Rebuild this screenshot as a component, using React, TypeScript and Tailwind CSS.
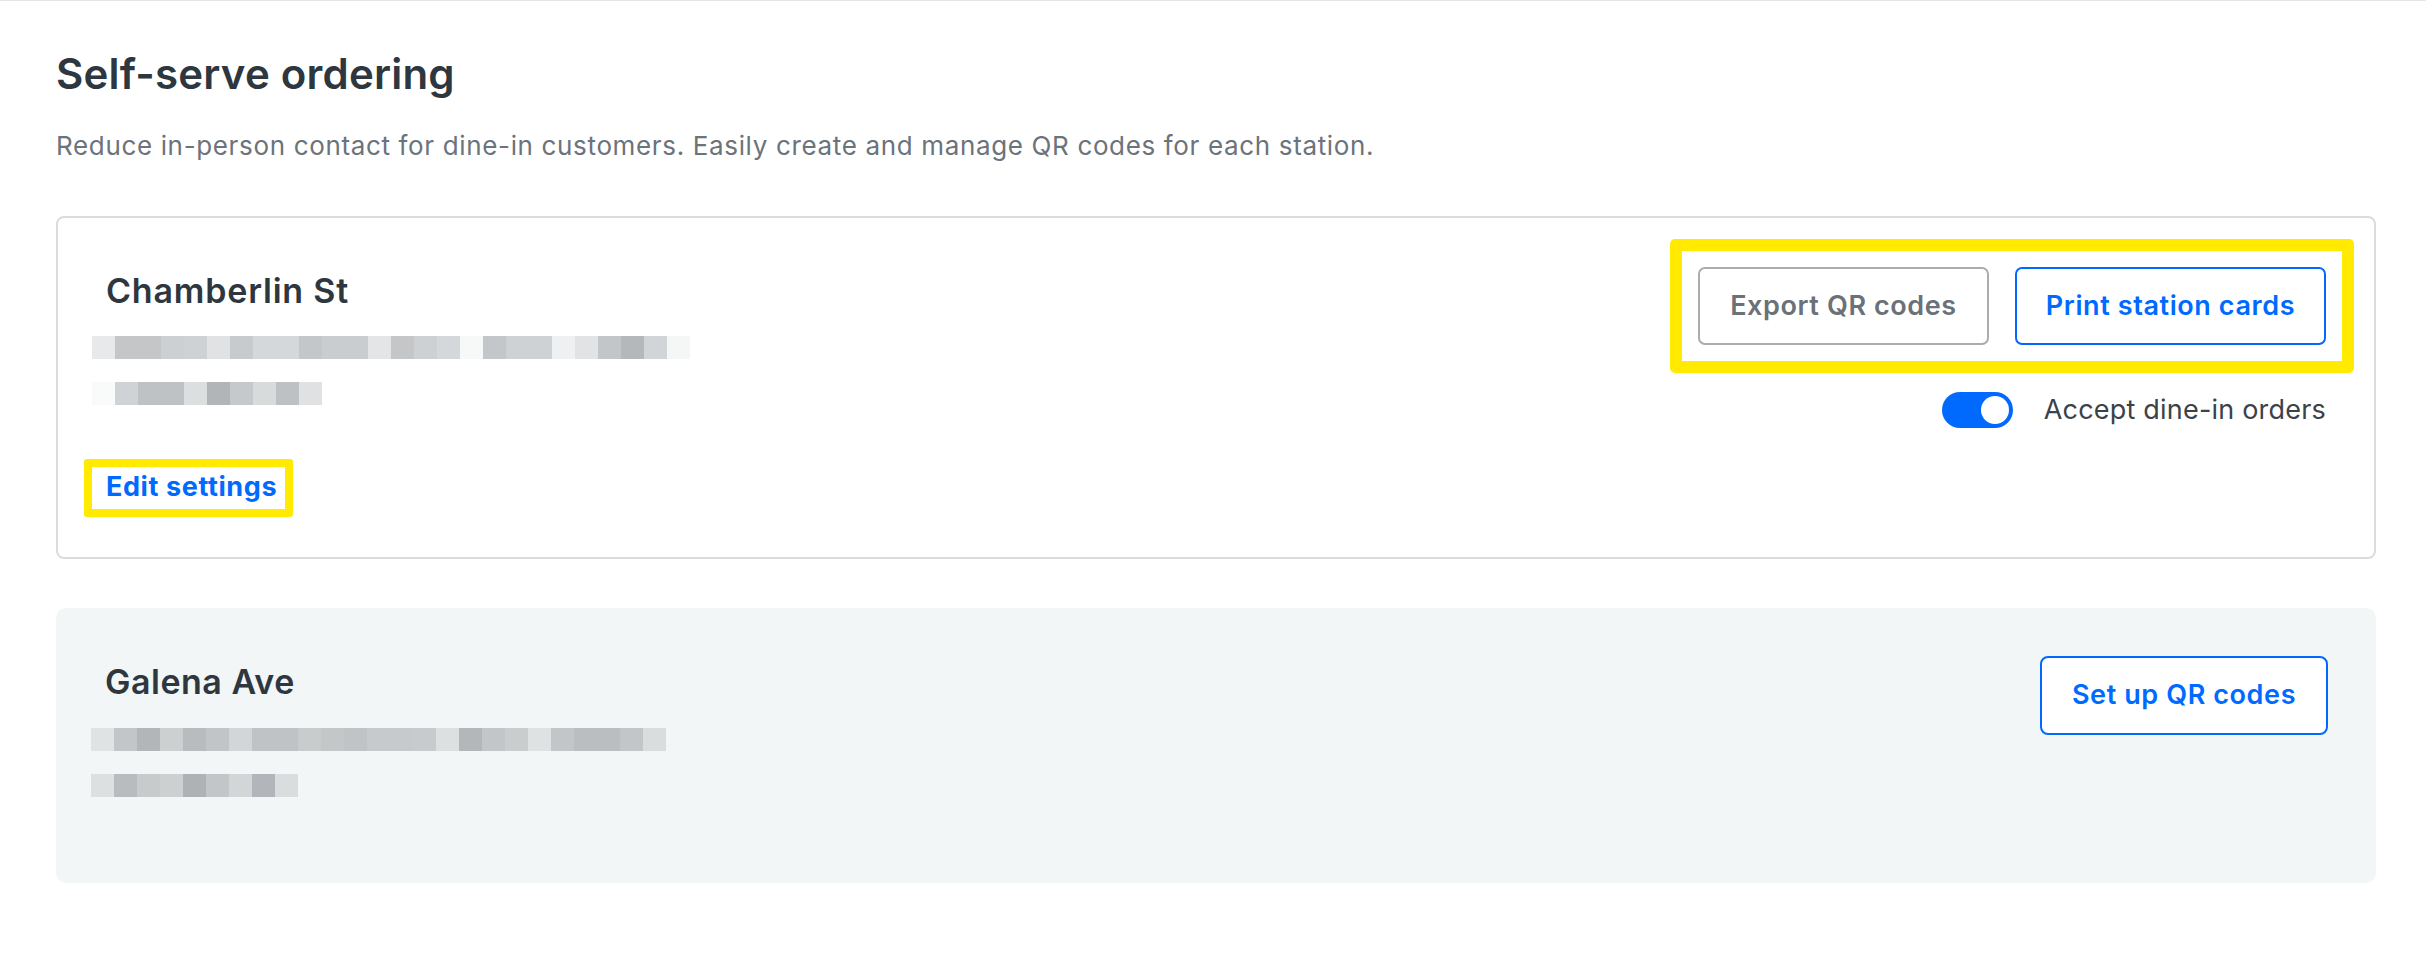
import React from "react";

const chamberlinLine1 = [
  "bg-[#e8e9ea]", "bg-[#c4c6c8]", "bg-[#c4c6c8]", "bg-[#cdd0d2]", "bg-[#cfd2d4]",
  "bg-[#e0e2e3]", "bg-[#c8cbcd]", "bg-[#d5d8da]", "bg-[#d5d8da]", "bg-[#c4c7c9]",
  "bg-[#cacdcf]", "bg-[#cacdcf]", "bg-[#e3e5e6]", "bg-[#c4c6c8]", "bg-[#ced1d3]",
  "bg-[#d5d8da]", "bg-[#f7f8f8]", "bg-[#c4c7c9]", "bg-[#cfd2d4]", "bg-[#cfd2d4]",
  "bg-[#eff0f1]", "bg-[#e1e3e4]", "bg-[#c3c6c8]", "bg-[#b5b8bb]", "bg-[#d2d5d7]",
  "bg-[#f5f6f6]",
];

const chamberlinLine2 = [
  "bg-[#f9fafa]", "bg-[#d0d3d5]", "bg-[#bfc2c5]", "bg-[#bfc2c5]", "bg-[#dcdfe0]",
  "bg-[#b2b5b8]", "bg-[#c6c9cb]", "bg-[#d8dbdc]", "bg-[#bec1c4]", "bg-[#dfe1e2]",
];

const galenaLine1 = [
  "bg-[#e0e3e4]", "bg-[#c3c6c8]", "bg-[#b3b6b9]", "bg-[#cdd0d1]", "bg-[#b9bcbe]",
  "bg-[#c1c5c7]", "bg-[#d3d6d8]", "bg-[#c0c3c5]", "bg-[#c0c3c5]", "bg-[#c9cccd]",
  "bg-[#c3c7c8]", "bg-[#c0c4c6]", "bg-[#c7cacc]", "bg-[#c7cacc]", "bg-[#c8cbcd]",
  "bg-[#dde0e1]", "bg-[#b3b7ba]", "bg-[#c2c6c8]", "bg-[#c9cdce]", "bg-[#dfe2e3]",
  "bg-[#c3c6c8]", "bg-[#bbbec1]", "bg-[#bbbec1]", "bg-[#c3c6c8]", "bg-[#dadddd]",
];

const galenaLine2 = [
  "bg-[#dde0e1]", "bg-[#b9bcbe]", "bg-[#c8cbcc]", "bg-[#cdd0d1]", "bg-[#aeb2b5]",
  "bg-[#c3c6c8]", "bg-[#d3d6d7]", "bg-[#b2b6bb]", "bg-[#dadddd]",
];

// blurred address lines (pixelated in the screenshot)
function Mosaic({ cells, className }: { cells: string[]; className?: string }) {
  return (
    <div className={`flex h-[23px] -ml-[14px] ${className ?? ""}`}>
      {cells.map((c, i) => (
        <div key={i} className={`h-[23px] w-[23px] ${c}`} />
      ))}
    </div>
  );
}

function Toggle() {
  return (
    <div className="flex h-[36px] w-[71px] items-center justify-end rounded-full bg-[#006aff] pr-[4px]">
      <div className="h-[28px] w-[28px] rounded-full bg-white" />
    </div>
  );
}

export default function App() {
  return (
    <div className="min-h-[958px] w-full border-t border-[#e3e6e8] bg-white pl-[56px] pr-[50px] pt-[49px] font-['Inter',sans-serif]">
      <h1 className="text-[42px] font-semibold leading-[48px] tracking-[0.2px] text-[#2e3740]">
        Self-serve ordering
      </h1>
      <p className="mt-[30px] text-[26px] leading-[36px] tracking-[0.65px] text-[#6b737b]">
        Reduce in-person contact for dine-in customers. Easily create and manage QR codes for each station.
      </p>

      {/* Chamberlin St */}
      <div className="mt-[52px] flex h-[343px] justify-between rounded-[8px] border-2 border-[#dadde0] px-[48px] pt-[49px]">
        <div className="mt-[4px] flex flex-col items-start">
          <div className="text-[34px] font-semibold leading-[40px] tracking-[0.8px] text-[#2e3740]">Chamberlin St</div>
          <Mosaic cells={chamberlinLine1} className="mt-[25px]" />
          <Mosaic cells={chamberlinLine2} className="mt-[23px]" />
          <div className="-ml-[22px] mt-[54px] rounded-[3px] border-[8px] border-[#ffea00] pb-[6px] pl-[14px] pr-[8px] pt-[4px]">
            <span className="text-[27px] font-bold leading-[32px] tracking-[0.6px] text-[#006aff]">Edit settings</span>
          </div>
        </div>

        <div className="flex flex-col items-end">
          <div className="-mr-[28px] -mt-[28px] -mb-[28px] flex gap-[26px] rounded-[5px] border-[12px] border-[#ffea00] p-[16px]">
            <button className="flex h-[78px] w-[291px] items-center justify-center rounded-[7px] border-2 border-[#a9adb1] bg-white text-[27px] font-semibold tracking-[0.6px] text-[#6b7178]">
              Export QR codes
            </button>
            <button className="flex h-[78px] w-[311px] items-center justify-center rounded-[7px] border-2 border-[#006aff] bg-white text-[27px] font-semibold tracking-[0.6px] text-[#006aff]">
              Print station cards
            </button>
          </div>
          <div className="mt-[47px] flex items-center gap-[31px]">
            <Toggle />
            <span className="text-[27px] leading-[36px] tracking-[0.2px] text-[#3b4249]">Accept dine-in orders</span>
          </div>
        </div>
      </div>

      {/* Galena Ave */}
      <div className="mt-[49px] flex h-[275px] justify-between rounded-[10px] bg-[#f2f6f6] pl-[49px] pr-[48px] pt-[48px]">
        <div className="mt-[6px] flex flex-col items-start">
          <div className="text-[34px] font-semibold leading-[40px] tracking-[0.5px] text-[#2e3740]">Galena Ave</div>
          <Mosaic cells={galenaLine1} className="mt-[26px]" />
          <Mosaic cells={galenaLine2} className="mt-[23px]" />
        </div>
        <div>
          <button className="flex h-[79px] w-[288px] items-center justify-center rounded-[8px] border-2 border-[#006aff] bg-white text-[27px] font-semibold tracking-[0.6px] text-[#006aff]">
            Set up QR codes
          </button>
        </div>
      </div>
    </div>
  );
}
